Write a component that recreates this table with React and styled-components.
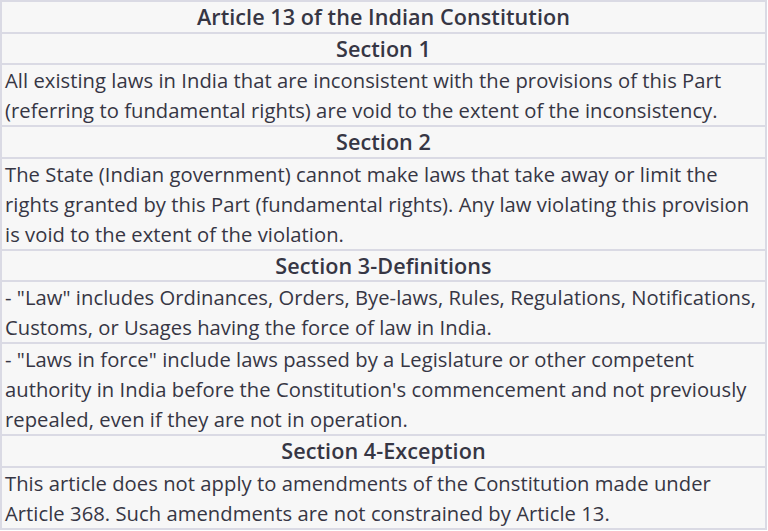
import React from "react";
import styled, { createGlobalStyle } from "styled-components";

const GlobalStyle = createGlobalStyle`
  html, body {
    margin: 0;
    padding: 0;
    background: #ffffff;
  }
`;

const Table = styled.table`
  width: 767px;
  border-collapse: collapse;
  font-family: "Open Sans", "Noto Sans", sans-serif;
  color: #363644;
  background: #f7f7f7;
`;

const Cell = styled.td`
  border: 2px solid #dadae4;
  padding: 0 3px;
  height: ${(p) => (p.$head ? "29.6px" : "auto")};
  font-size: ${(p) => (p.$head ? "21.6px" : "20.2px")};
  letter-spacing: 0.05px;
  line-height: ${(p) => (p.$head ? "29.6px" : "30px")};
  text-align: ${(p) => (p.$head ? "center" : "left")};
  font-weight: ${(p) => (p.$head ? 600 : 400)};
  vertical-align: middle;
`;

const rows = [
  { head: true, text: "Article 13 of the Indian Constitution" },
  { head: true, text: "Section 1" },
  {
    text:
      "All existing laws in India that are inconsistent with the provisions of this Part (referring to fundamental rights) are void to the extent of the inconsistency.",
  },
  { head: true, text: "Section 2" },
  {
    text:
      "The State (Indian government) cannot make laws that take away or limit the rights granted by this Part (fundamental rights). Any law violating this provision is void to the extent of the violation.",
  },
  { head: true, text: "Section 3-Definitions" },
  {
    text:
      '- "Law" includes Ordinances, Orders, Bye-laws, Rules, Regulations, Notifications, Customs, or Usages having the force of law in India.',
  },
  {
    text:
      '- "Laws in force" include laws passed by a Legislature or other competent authority in India before the Constitution\'s commencement and not previously repealed, even if they are not in operation.',
  },
  { head: true, text: "Section 4-Exception" },
  {
    text:
      "This article does not apply to amendments of the Constitution made under Article 368. Such amendments are not constrained by Article 13.",
  },
];

export default function App() {
  return (
    <>
      <GlobalStyle />
      <Table>
        <tbody>
          {rows.map((row, i) => (
            <tr key={i}>
              <Cell $head={row.head}>{row.text}</Cell>
            </tr>
          ))}
        </tbody>
      </Table>
    </>
  );
}
